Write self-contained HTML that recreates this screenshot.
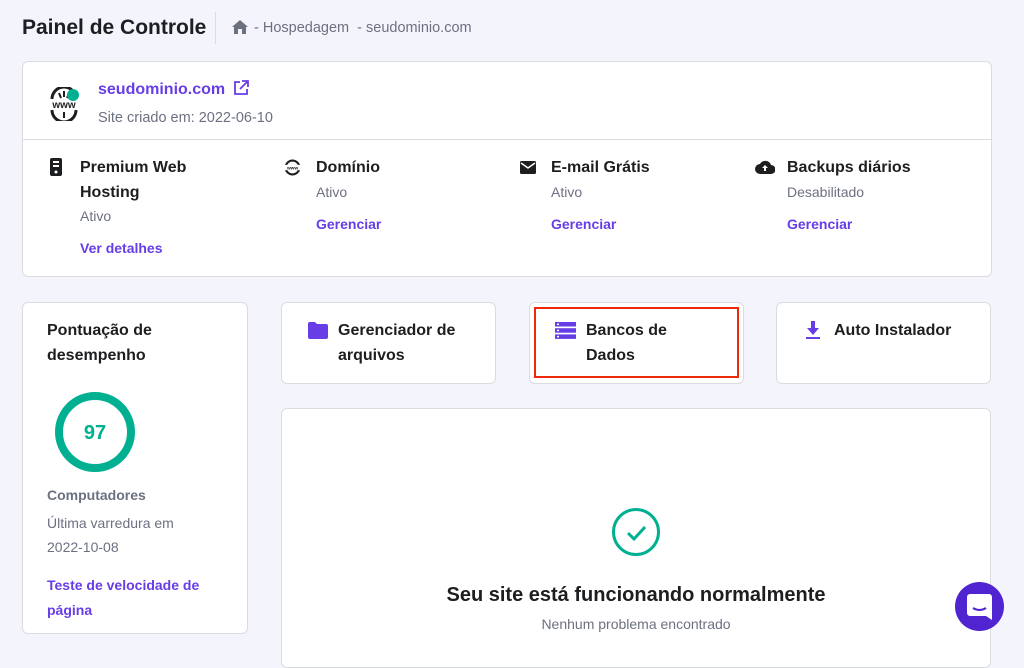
<!DOCTYPE html>
<html><head><meta charset="utf-8"><style>
*{box-sizing:border-box;margin:0;padding:0}
body{width:1024px;height:646px;overflow:hidden;background:#f4f4fc;font-family:"Liberation Sans",sans-serif;color:#2f1c6a;position:relative}
.t{color:#1d1e20}
.card{position:absolute;background:#fff;border:1px solid #dadce0;border-radius:6px}
.g{color:#6d7081;font-size:14px}
.p{color:#673de6;font-weight:bold;font-size:14px}
.h{color:#1d1e20;font-weight:bold;font-size:16px;line-height:25px}
.abs{position:absolute}
</style></head><body>
<div class="abs t" style="left:22px;top:16px;font-size:21px;font-weight:bold">Painel de Controle</div>
<div class="abs" style="left:215px;top:12px;width:1px;height:32px;background:#dadce0"></div>
<svg class="abs" style="left:232px;top:20px" width="16" height="14" viewBox="0 0 16 14"><path d="M8 0L0 7h2v7h4V9h4v5h4V7h2z" fill="#6d7081"/></svg>
<div class="abs g" style="left:254px;top:20px;font-size:14.5px">- Hospedagem &nbsp;- seudominio.com</div>

<div class="card" style="left:22px;top:61px;width:970px;height:216px">
 <div style="position:absolute;left:0;right:0;top:77px;height:1px;background:#dadce0"></div>
</div>
<svg class="abs" style="left:47px;top:87px" width="34" height="34" viewBox="0 0 34 34"><path d="M5 12a12 12 0 0124 0" fill="none" stroke="#1d1e20" stroke-width="3"/><path d="M5 23a12 12 0 0024 0" fill="none" stroke="#1d1e20" stroke-width="3"/><path d="M17 4v6M12 6l2 5M22 6l-2 5M17 25v6" stroke="#1d1e20" stroke-width="2"/><text x="17" y="21" font-size="10" font-weight="bold" text-anchor="middle" font-family="Liberation Sans" fill="#1d1e20">www</text><circle cx="26" cy="8" r="6" fill="#00b090"/></svg>
<div class="abs" style="left:98px;top:80px;color:#673de6;font-weight:bold;font-size:16px">seudominio.com <svg width="16" height="16" viewBox="0 0 16 16" style="vertical-align:-2px;margin-left:3px"><path d="M7 2H2v12h12V9M9 1h6v6M15 1L7 9" fill="none" stroke="#673de6" stroke-width="1.8"/></svg></div>
<div class="abs g" style="left:98px;top:110px;font-size:14.5px">Site criado em: 2022-06-10</div>

<svg class="abs" style="left:50px;top:158px" width="12" height="18"><rect width="12" height="18" rx="2" fill="#1d1e20"/><rect x="3" y="3" width="6" height="2" fill="#fff"/><rect x="3" y="7" width="6" height="2" fill="#fff"/><circle cx="6" cy="14" r="1.5" fill="#fff"/></svg>
<div class="abs h" style="left:80px;top:155px;width:160px">Premium Web<br>Hosting</div>
<div class="abs g" style="left:80px;top:208px">Ativo</div>
<div class="abs p" style="left:80px;top:240px">Ver detalhes</div>

<svg class="abs" style="left:284px;top:159px" width="17" height="17" viewBox="0 0 32 32"><circle cx="16" cy="16" r="13" fill="none" stroke="#1d1e20" stroke-width="4"/><rect x="0" y="11" width="32" height="10" fill="#fff"/><text x="16" y="20" font-size="9" font-weight="bold" text-anchor="middle" font-family="Liberation Sans" fill="#1d1e20">www</text></svg>
<div class="abs h" style="left:316px;top:155px">Domínio</div>
<div class="abs g" style="left:316px;top:184px">Ativo</div>
<div class="abs p" style="left:316px;top:216px">Gerenciar</div>

<svg class="abs" style="left:520px;top:161px" width="16" height="13"><rect width="16" height="13" rx="1.5" fill="#1d1e20"/><path d="M1 2l7 5 7-5" fill="none" stroke="#fff" stroke-width="1.5"/></svg>
<div class="abs h" style="left:551px;top:155px">E-mail Grátis</div>
<div class="abs g" style="left:551px;top:184px">Ativo</div>
<div class="abs p" style="left:551px;top:216px">Gerenciar</div>

<svg class="abs" style="left:755px;top:160px" width="20" height="14" viewBox="0 0 20 14"><path d="M5 14a5 5 0 010-10 6 6 0 0111 1 4.5 4.5 0 010 9z" fill="#1d1e20"/><path d="M10 5l-3 3h2v3h2V8h2z" fill="#fff"/></svg>
<div class="abs h" style="left:787px;top:155px">Backups diários</div>
<div class="abs g" style="left:787px;top:184px">Desabilitado</div>
<div class="abs p" style="left:787px;top:216px">Gerenciar</div>

<div class="card" style="left:22px;top:302px;width:226px;height:332px"></div>
<div class="abs h" style="left:47px;top:318px">Pontuação de<br>desempenho</div>
<svg class="abs" style="left:54px;top:391px" width="82" height="82"><circle cx="41" cy="41" r="36" fill="none" stroke="#00b090" stroke-width="8"/><text x="41" y="48" font-size="20" font-weight="bold" text-anchor="middle" font-family="Liberation Sans" fill="#00b090">97</text></svg>
<div class="abs" style="left:47px;top:487px;font-size:14px;font-weight:bold;color:#6d7081">Computadores</div>
<div class="abs g" style="left:47px;top:511px;line-height:24px">Última varredura em<br>2022-10-08</div>
<div class="abs p" style="left:47px;top:573px;line-height:25px">Teste de velocidade de<br>página</div>

<div class="card" style="left:281px;top:302px;width:215px;height:82px"></div>
<svg class="abs" style="left:308px;top:322px" width="20" height="17"><path d="M0 2a2 2 0 012-2h5l2 2h9a2 2 0 012 2v11a2 2 0 01-2 2H2a2 2 0 01-2-2z" fill="#673de6"/></svg>
<div class="abs h" style="left:338px;top:318px">Gerenciador de<br>arquivos</div>

<div class="card" style="left:529px;top:302px;width:215px;height:82px"></div>
<div class="abs" style="left:534px;top:307px;width:205px;height:71px;border:2px solid #f0280a"></div>
<svg class="abs" style="left:555px;top:322px" width="21" height="17"><rect width="21" height="4.5" fill="#673de6"/><rect y="6.2" width="21" height="4.5" fill="#673de6"/><rect y="12.4" width="21" height="4.5" fill="#673de6"/><rect x="2" y="1.5" width="2" height="1.5" fill="#fff"/><rect x="2" y="7.7" width="2" height="1.5" fill="#fff"/><rect x="2" y="13.9" width="2" height="1.5" fill="#fff"/></svg>
<div class="abs h" style="left:586px;top:318px">Bancos de<br>Dados</div>

<div class="card" style="left:776px;top:302px;width:215px;height:82px"></div>
<svg class="abs" style="left:806px;top:321px" width="14" height="19"><path d="M5 0h4v7h4l-6 7-6-7h4z" fill="#673de6"/><rect y="16" width="14" height="2" fill="#673de6"/></svg>
<div class="abs h" style="left:834px;top:318px">Auto Instalador</div>

<div class="card" style="left:281px;top:408px;width:710px;height:260px"></div>
<svg class="abs" style="left:611px;top:507px" width="50" height="50"><circle cx="25" cy="25" r="22.5" fill="none" stroke="#00b090" stroke-width="3"/><path d="M17 26l6 6 11-12" fill="none" stroke="#00b090" stroke-width="3"/></svg>
<div class="abs t" style="left:281px;width:710px;text-align:center;top:584px;font-size:20px;font-weight:bold">Seu site está funcionando normalmente</div>
<div class="abs g" style="left:281px;width:710px;text-align:center;top:616px">Nenhum problema encontrado</div>

<div class="abs" style="left:955px;top:582px;width:49px;height:49px;border-radius:50%;background:#5025d1"></div>
<svg class="abs" style="left:967px;top:594px" width="25" height="26"><path d="M3 0h19a3 3 0 013 3v23l-6-4H3a3 3 0 01-3-3V3a3 3 0 013-3z" fill="#fff"/><path d="M6 14q6.5 4 13 0" fill="none" stroke="#5025d1" stroke-width="2"/></svg>
</body></html>
